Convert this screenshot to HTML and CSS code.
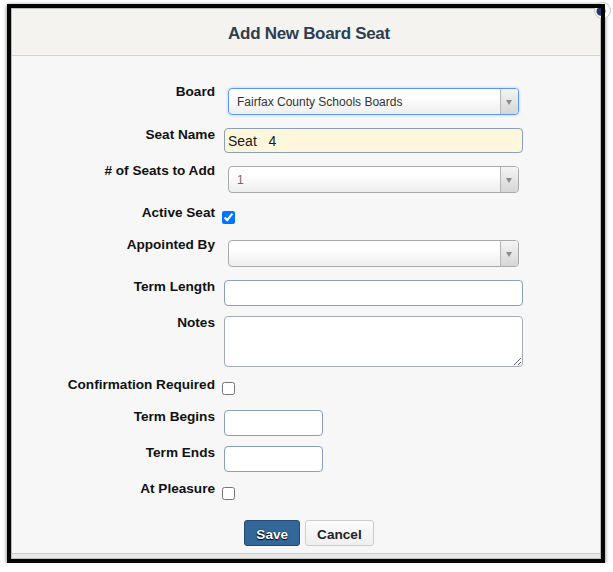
FILE: index.html
```html
<!DOCTYPE html>
<html lang="en">
<head>
<meta charset="utf-8">
<title>Add New Board Seat</title>
<link rel="stylesheet" href="styles.css">
</head>
<body>
<div class="frame">
  <div class="modal">
    <div class="header"><h1 class="title">Add New Board Seat</h1></div>
    <div class="body">
      <form class="form">
        <label class="lbl">Board</label>
        <div class="ctl ctl-board">
          <div class="sel sel-focus"><span class="sel-text">Fairfax County Schools Boards</span><span class="sel-arrow"></span></div>
        </div>

        <label class="lbl">Seat Name</label>
        <div class="ctl ctl-txt"><input class="txt txt-seat" type="text" value="Seat   4"></div>

        <label class="lbl"># of Seats to Add</label>
        <div class="ctl ctl-sel">
          <div class="sel"><span class="sel-text sel-muted">1</span><span class="sel-arrow"></span></div>
        </div>

        <label class="lbl">Active Seat</label>
        <div class="ctl ctl-cb"><input class="cb" type="checkbox" checked></div>

        <label class="lbl">Appointed By</label>
        <div class="ctl ctl-sel">
          <div class="sel"><span class="sel-text"></span><span class="sel-arrow"></span></div>
        </div>

        <label class="lbl">Term Length</label>
        <div class="ctl ctl-txt"><input class="txt" type="text"></div>

        <label class="lbl">Notes</label>
        <div class="ctl ctl-txt"><textarea class="txt area"></textarea></div>

        <label class="lbl">Confirmation Required</label>
        <div class="ctl ctl-cb5"><input class="cb" type="checkbox"></div>

        <label class="lbl">Term Begins</label>
        <div class="ctl ctl-txt"><input class="txt txt-short" type="text"></div>

        <label class="lbl">Term Ends</label>
        <div class="ctl ctl-txt"><input class="txt txt-short" type="text"></div>

        <label class="lbl">At Pleasure</label>
        <div class="ctl ctl-cb"><input class="cb" type="checkbox"></div>
      </form>
      <div class="actions">
        <button class="btn btn-primary" type="button">Save</button>
        <button class="btn btn-default" type="button">Cancel</button>
      </div>
    </div>
    <div class="peek"></div>
  </div>
  <span class="close-btn"></span>
</div>
</body>
</html>
```

FILE: styles.css
```css
html, body {
  margin: 0;
  padding: 0;
  background: #ffffff;
  font-family: "Liberation Sans", Arial, sans-serif;
}

.frame {
  position: relative;
  box-sizing: border-box;
  margin: 4px 0 0 7px;
  width: 598px;
  height: 559px;
  padding: 4px;
  box-shadow: 0 1px 4px rgba(0, 0, 0, 0.55);
}

.frame::after {
  content: "";
  position: absolute;
  inset: 0;
  border: 4px solid #050505;
  pointer-events: none;
  z-index: 2;
}

.close-btn {
  position: absolute;
  top: -2px;
  right: -6px;
  width: 15px;
  height: 15px;
  border-radius: 50%;
  border: 1px solid #c8c8c8;
  background: radial-gradient(circle at 40% 55%, #1d3a64 0, #1d3a64 4px, #ffffff 5px);
  z-index: 1;
}

.modal {
  box-sizing: border-box;
  height: 100%;
  border: 1px solid #bdbdbd;
  background: #f7f7f7;
  display: flex;
  flex-direction: column;
}

.header {
  background: #f4f3ef;
  border-bottom: 1px solid #d3d2cd;
  padding: 15px 0 11px 6px;
  text-align: center;
}

.title {
  margin: 0;
  font-size: 17px;
  line-height: 20px;
  font-weight: bold;
  letter-spacing: -0.3px;
  color: #2d3e50;
}

.body {
  flex: 1;
  padding-top: 28px;
}

.form {
  display: grid;
  grid-template-columns: 203px 1fr;
  column-gap: 7px;
  grid-template-rows: 43px 36px 42px 32px 42px 36px 62px 32px 36px 36px 25px;
}

.lbl {
  text-align: right;
  font-size: 13.6px;
  line-height: 16px;
  font-weight: bold;
  color: #111111;
  white-space: nowrap;
}

.ctl-board { padding: 4px 0 0 6px; }
.ctl-sel { padding: 3px 0 0 6px; }
.ctl-txt { padding: 1px 0 0 2px; }
.ctl-cb { padding-top: 6px; }
.ctl-cb5 { padding-top: 5px; }

.sel {
  box-sizing: border-box;
  display: flex;
  width: 291px;
  height: 27px;
  border: 1px solid #aaaaaa;
  border-radius: 4px;
  background: linear-gradient(#ffffff 30%, #eeeeee 100%);
}

.sel-focus {
  border-color: #5897fb;
  box-shadow: 0 0 3px rgba(88, 151, 251, 0.45);
}

.sel-text {
  flex: 1;
  padding: 1px 8px 0;
  font-size: 12px;
  line-height: 24px;
  color: #333333;
  white-space: nowrap;
  overflow: hidden;
}

.sel-muted {
  color: #6b6b6b;
}

.sel-arrow {
  position: relative;
  box-sizing: border-box;
  width: 18px;
  border-left: 1px solid #b5b5b5;
  border-radius: 0 3px 3px 0;
  background: linear-gradient(#f4f4f4, #d6d6d6);
}

.sel-arrow::after {
  content: "";
  position: absolute;
  left: 5px;
  top: 11px;
  border-top: 5px solid #8a8a8a;
  border-left: 3.5px solid transparent;
  border-right: 3.5px solid transparent;
}

.txt {
  box-sizing: border-box;
  display: block;
  width: 299px;
  height: 26px;
  margin: 0;
  padding: 0 3px;
  border: 1px solid #8aa0b8;
  border-radius: 4px;
  background: #ffffff;
  font-family: "Liberation Sans", Arial, sans-serif;
  font-size: 14px;
  color: #1a1a1a;
  outline: none;
}

.txt-seat {
  height: 25px;
  background: #fff7dc;
}

.txt-short {
  width: 99px;
}

.area {
  height: 51px;
  padding: 3px;
  border-color: #a2acb6;
  resize: both;
}

.cb {
  display: block;
  width: 13px;
  height: 13px;
  margin: 0;
}

.actions {
  display: flex;
  justify-content: center;
  gap: 5px;
  margin-top: 14px;
  padding-left: 6px;
}

.btn {
  box-sizing: border-box;
  height: 26px;
  margin: 0;
  padding: 3px 11px 0;
  border-radius: 3px;
  font-family: "Liberation Sans", Arial, sans-serif;
  font-size: 13.6px;
  line-height: 21px;
  font-weight: bold;
  vertical-align: top;
}

.btn-primary {
  background: #336699;
  border: 1px solid #234d78;
  color: #ffffff;
  text-shadow: 0 0 1px #000000, 0 1px 1px #000000;
}

.btn-default {
  background: linear-gradient(#fbfbfb, #efefef);
  border: 1px solid #cccccc;
  color: #222222;
}

.peek {
  height: 4px;
  background: #e9e9e9;
  border-top: 1px solid #c9c9c9;
}
```
